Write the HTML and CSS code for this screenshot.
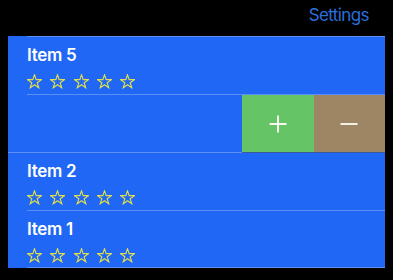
FILE: index.html
```html
<!DOCTYPE html>
<html lang="en">
<head>
<meta charset="utf-8">
<title>Items</title>
<link rel="stylesheet" href="styles.css">
</head>
<body>
<svg class="defs" width="0" height="0" aria-hidden="true">
  <symbol id="star" viewBox="0 0 15 15">
    <path d="M7.5 0.7 L9.14 5.64 L14.4 5.64 L10.15 8.76 L11.79 13.8 L7.5 10.69 L3.21 13.8 L4.85 8.76 L0.6 5.64 L5.86 5.64 Z" fill="none" stroke="#e3df4a" stroke-width="1.1" stroke-linejoin="miter"/>
  </symbol>
</svg>
<header class="nav">
  <span class="nav-btn">Settings</span>
</header>
<main class="table">
  <div class="row">
    <div class="cell">
      <div class="title">Item 5</div>
      <div class="stars">
        <svg class="star"><use href="#star"/></svg>
        <svg class="star"><use href="#star"/></svg>
        <svg class="star"><use href="#star"/></svg>
        <svg class="star"><use href="#star"/></svg>
        <svg class="star"><use href="#star"/></svg>
      </div>
    </div>
  </div>
  <div class="row swiped">
    <div class="cell empty"></div>
    <div class="action add">
      <svg width="18" height="18" viewBox="0 0 18 18"><path d="M9 0.5 V17.5 M0.5 9 H17.5" stroke="#f4f6ef" stroke-width="2" fill="none"/></svg>
    </div>
    <div class="action remove">
      <svg width="18" height="4" viewBox="0 0 18 4"><path d="M0.5 2 H17.5" stroke="#f4efe6" stroke-width="2" fill="none"/></svg>
    </div>
  </div>
  <div class="row">
    <div class="cell">
      <div class="title">Item 2</div>
      <div class="stars">
        <svg class="star"><use href="#star"/></svg>
        <svg class="star"><use href="#star"/></svg>
        <svg class="star"><use href="#star"/></svg>
        <svg class="star"><use href="#star"/></svg>
        <svg class="star"><use href="#star"/></svg>
      </div>
    </div>
  </div>
  <div class="row last">
    <div class="cell">
      <div class="title">Item 1</div>
      <div class="stars">
        <svg class="star"><use href="#star"/></svg>
        <svg class="star"><use href="#star"/></svg>
        <svg class="star"><use href="#star"/></svg>
        <svg class="star"><use href="#star"/></svg>
        <svg class="star"><use href="#star"/></svg>
      </div>
    </div>
  </div>
</main>
</body>
</html>
```

FILE: styles.css
```css
html, body {
  margin: 0;
  padding: 0;
  background: #000;
  width: 393px;
  height: 280px;
  overflow: hidden;
  font-family: Inter, "Noto Sans", sans-serif;
}
.defs {
  position: absolute;
  width: 0;
  height: 0;
}
.nav {
  height: 36px;
  box-sizing: border-box;
  display: flex;
  justify-content: flex-end;
  padding: 5px 24px 0 0;
}
.nav-btn {
  color: #2a6fda;
  font-size: 17px;
  line-height: 20px;
  letter-spacing: -0.6px;
}
.table {
  margin: 0 8px;
  background: #1f67f4;
  display: flex;
  flex-direction: column;
  background-image: linear-gradient(#5b8ff6, #5b8ff6);
  background-size: calc(100% - 19px) 1px;
  background-position: right top;
  background-repeat: no-repeat;
  padding-top: 1px;
}
.row {
  display: flex;
  height: 57px;
  border-bottom: 1px solid transparent;
  background-image: linear-gradient(#5b8ff6, #5b8ff6);
  background-size: calc(100% - 19px) 1px;
  background-position: right bottom;
  background-repeat: no-repeat;
  background-origin: border-box;
}
.row.last {
  height: 56px;
}
.cell {
  flex: 1;
  padding: 8px 0 0 19px;
  box-sizing: border-box;
}
.title {
  color: #fff;
  font-size: 17px;
  font-weight: 600;
  line-height: 20px;
  letter-spacing: -0.3px;
}
.stars {
  display: flex;
  gap: 8.33px;
  margin-top: 9px;
}
.star {
  width: 15px;
  height: 15px;
  display: block;
}
.row.swiped {
  background-image: linear-gradient(#5b8ff6, #5b8ff6), linear-gradient(#3b5c96, #3b5c96);
  background-size: 234px 1px, 100% 1px;
  background-position: left bottom, left bottom;
}
.action {
  width: 71.5px;
  display: flex;
  align-items: center;
  justify-content: center;
}
.action.add {
  background: #64c466;
}
.action.remove {
  background: #9e8563;
}
```
